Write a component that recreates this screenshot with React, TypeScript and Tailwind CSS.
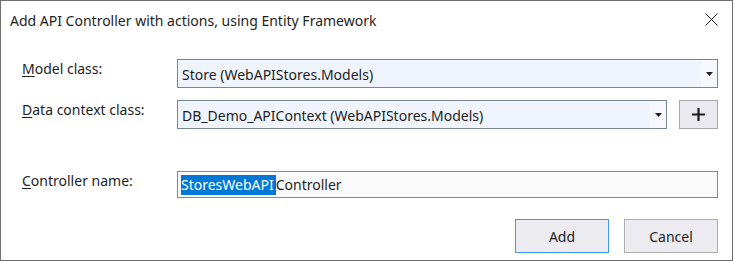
import React from 'react'

const font = "font-['Noto_Sans','Open_Sans',sans-serif]"

const Caret = () => (
  <svg width="7" height="4" viewBox="0 0 7 4" className="block">
    <path d="M0 0h7L3.5 4z" fill="#1e1e1e" />
  </svg>
)

const Dropdown = ({ value, className }: { value: string; className: string }) => (
  <div
    className={`flex h-[29px] items-stretch border border-[#7a8594] bg-[#f0f4fc] ${className}`}
  >
    <div className="flex flex-1 items-center pl-[4px] pt-[1px] text-[14px] text-[#1e1e1e]">{value}</div>
    <div className="flex w-[16px] items-center justify-center bg-[#f6f8fd] pt-[1px]">
      <Caret />
    </div>
  </div>
)

const Label = ({ hotkey, rest }: { hotkey: string; rest: string }) => (
  <div className="w-[155px] shrink-0 text-[14px] leading-[20px] text-[#1e1e1e]">
    <span className="underline underline-offset-2">{hotkey}</span>
    {rest}
  </div>
)

export default function App() {
  return (
    <div className={`h-[262px] w-[734px] bg-white ${font}`}>
      <div className="flex h-[261px] w-[733px] flex-col border border-[#707070] bg-white">
        <div className="flex h-[40px] items-center justify-between pl-[9px] pr-[14px]">
          <div className="pb-[1px] text-[14px] text-[#1e1e1e]">Add API Controller with actions, using Entity Framework</div>
          <svg width="13" height="13" viewBox="0 0 13 13" className="mb-[3px]">
            <path d="M0.5 0.5l12 12M12.5 0.5l-12 12" stroke="#1e1e1e" strokeWidth="1" />
          </svg>
        </div>

        <div className="mt-[18px] flex flex-col pl-[21px] pr-[14px]">
          <div className="flex items-start">
            <Label hotkey="M" rest="odel class:" />
            <Dropdown value="Store (WebAPIStores.Models)" className="flex-1" />
          </div>

          <div className="mt-[12px] flex items-start">
            <Label hotkey="D" rest="ata context class:" />
            <Dropdown value="DB_Demo_APIContext (WebAPIStores.Models)" className="w-[490px]" />
            <button className="ml-[12px] flex h-[29px] flex-1 items-center justify-center border border-[#a8a8a8] bg-[#e9e9ef]">
              <svg width="13" height="13" viewBox="0 0 13 13">
                <path d="M0 6.5h13M6.5 0v13" stroke="#1e1e1e" strokeWidth="2.2" />
              </svg>
            </button>
          </div>

          <div className="mt-[42px] flex items-start">
            <Label hotkey="C" rest="ontroller name:" />
            <div className="flex h-[27px] flex-1 items-center border border-[#b0862c] bg-[#fafafa] pl-[3px] text-[14px] text-[#1e1e1e]">
              <span className="bg-[#0078d7] pr-[2px] leading-[20px] text-white">StoresWebAPI</span>
              <span className="leading-[20px]">Controller</span>
            </div>
          </div>

          <div className="mt-[21px] flex justify-end gap-[15px]">
            <button className="h-[34px] w-[94px] border border-[#3d9bf0] bg-[#ecebf0] text-[14px] text-[#1e1e1e]">
              Add
            </button>
            <button className="h-[34px] w-[94px] border border-[#adadad] bg-[#ecebf0] text-[14px] text-[#1e1e1e]">
              Cancel
            </button>
          </div>
        </div>
      </div>
    </div>
  )
}
